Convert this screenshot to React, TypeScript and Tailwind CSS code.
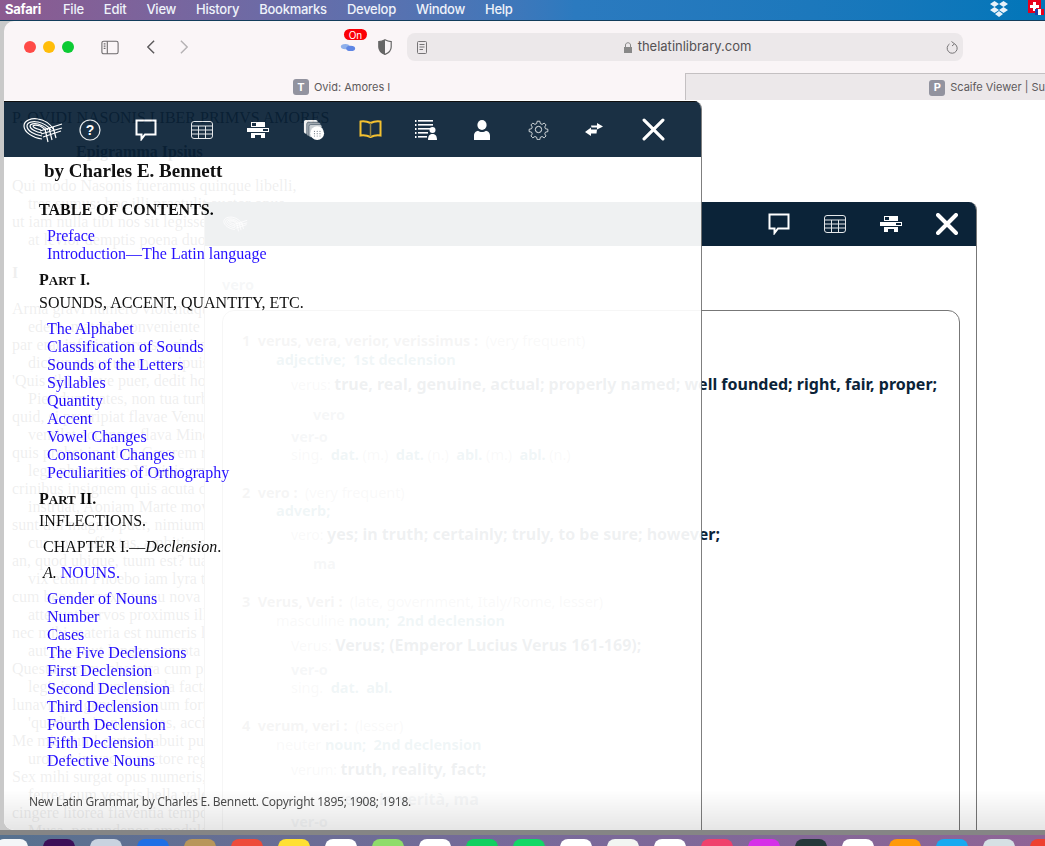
import React from 'react'

const serif = "font-['Liberation_Serif',serif]"

const menuItems = ['File', 'Edit', 'View', 'History', 'Bookmarks', 'Develop', 'Window', 'Help']

const dockIcons = [
  'bg-[#f4f6f8]', 'bg-[#3c0f58]', 'bg-[#c9d3e0]', 'bg-[#1f6fe5]', 'bg-[#b8965a]', 'bg-[#ee4b3a]',
  'bg-[#ffe033]', 'bg-white', 'bg-[#8fdc6a]', 'bg-white', 'bg-[#10d060]', 'bg-[#12d866]',
  'bg-white', 'bg-[#f2f5f2]', 'bg-white', 'bg-[#f0416c]', 'bg-[#d530e8]', 'bg-[#24393a]',
  'bg-white', 'bg-[#ff9a0a]', 'bg-[#18aaf0]', 'bg-[#d5e0e4]', 'bg-[#ee4030]',
]

const pageLines: [string, boolean][] = [
  ['Arma gravi numero violentaque bella parabam', false],
  ['edere, materia conveniente modis.', true],
  ['par erat inferior versus—risisse Cupido', false],
  ['dicitur atque unum surripuisse pedem.', true],
  ["'Quis tibi, saeve puer, dedit hoc in carmina iuris?", false],
  ['Pieridum vates, non tua turba sumus.', true],
  ['quid, si praeripiat flavae Venus arma Minervae,', false],
  ['ventilet accensas flava Minerva faces?', true],
  ['quis probet in silvis Cererem regnare iugosis,', false],
  ['lege pharetratae Virginis arva coli?', true],
  ['crinibus insignem quis acuta cuspide Phoebum', false],
  ['instruat, Aoniam Marte movente lyram?', true],
  ['sunt tibi magna, puer, nimiumque potentia regna;', false],
  ['cur opus affectas, ambitiose, novum?', true],
  ['an, quod ubique, tuum est? tua sunt Heliconia tempe?', false],
  ['vix etiam Phoebo iam lyra tuta sua est?', true],
  ['cum bene surrexit versu nova pagina primo,', false],
  ['attenuat nervos proximus ille meos;', true],
  ['nec mihi materia est numeris levioribus apta,', false],
  ['aut puer aut longas compta puella comas.', true],
  ['Questus eram, pharetra cum protinus ille soluta', false],
  ['legit in exitium spicula facta meum,', true],
  ['lunavitque genu sinuosum fortiter arcum,', false],
  ["'quod'que 'canas, vates, accipe' dixit 'opus!'", true],
  ['Me miserum! certas habuit puer ille sagittas.', false],
  ['uror, et in vacuo pectore regnat Amor.', true],
  ['Sex mihi surgat opus numeris, in quinque residat:', false],
  ['ferrea cum vestris bella valete modis!', true],
  ['cingere litorea flaventia tempora myrto,', false],
  ['Musa, per undenos emodulanda pedes!', true],
]

const linksOne = ['The Alphabet', 'Classification of Sounds', 'Sounds of the Letters', 'Syllables', 'Quantity', 'Accent', 'Vowel Changes', 'Consonant Changes', 'Peculiarities of Orthography']
const linksTwo = ['Gender of Nouns', 'Number', 'Cases', 'The Five Declensions', 'First Declension', 'Second Declension', 'Third Declension', 'Fourth Declension', 'Fifth Declension', 'Defective Nouns']

function Logo({ className }: { className?: string }) {
  return (
    <svg viewBox="0 0 40 26" className={className} fill="none" stroke="currentColor" strokeWidth="1.2">
      <path d="M19 22C10 21 1 15 1 9C1 3 9 1 15 2C22 3 28 8 31 13" />
      <path d="M19 19C12 18 4 14 4 9C4 5 10 4 15 5C20 6 25 9 28 13" />
      <path d="M19 16C13 15 7 12 7 9C7 7 11 6 15 7C19 8 22 10 25 13" />
      <path d="M18 13C14 12 10 11 10 9C11 8 14 8 17 9C19 10 21 11 22 13" />
      <path d="M17 14L39 7M18 17L39 11M20 20L38 14" />
      <path d="M22 12L25 25M26 11L29 23M30 10L33 21" />
    </svg>
  )
}

function ChatIcon({ className }: { className?: string }) {
  return (
    <svg viewBox="0 0 22 22" className={className} fill="none" stroke="white" strokeWidth="2">
      <path d="M1.5 1.5H20.5V15.5H10L6.5 20V15.5H1.5Z" />
    </svg>
  )
}

function TableIcon({ className }: { className?: string }) {
  return (
    <svg viewBox="0 0 22 18" className={className} fill="#0b2338" stroke="#e5e8ea" strokeWidth="1">
      <rect x="0.5" y="0.5" width="21" height="17" rx="2.5" />
      <path d="M0.5 5H21.5M0.5 9H21.5M0.5 13H21.5M7.5 5V17.5M14.5 5V17.5" />
    </svg>
  )
}

function BarsIcon({ className }: { className?: string }) {
  return (
    <svg viewBox="0 0 22 16" className={className} fill="white">
      <path d="M4 0H18V5H4ZM5 1V4H9V1Z" fillRule="evenodd" />
      <path d="M0 6H22V10H0ZM16 7V9H21V7Z" fillRule="evenodd" />
      <path d="M4 11H18V16H14V13H8V16H4Z" />
    </svg>
  )
}

function StackIcon({ className }: { className?: string }) {
  return (
    <svg viewBox="0 0 24 24" className={className}>
      <rect x="1" y="1" width="15" height="15" rx="2" fill="#f2f2f2" />
      <rect x="4" y="3.5" width="15" height="15" rx="2" fill="#9aa3ab" stroke="#0b2338" strokeWidth="0.5" />
      <rect x="6.5" y="6" width="14" height="14" rx="2" fill="#c7ccd1" stroke="#0b2338" strokeWidth="0.5" />
      <circle cx="15.5" cy="15.5" r="7.5" fill="white" />
      <g fill="#6c7680">
        <circle cx="12.5" cy="13.5" r="0.6" /><circle cx="15.5" cy="13.5" r="0.6" /><circle cx="18.5" cy="13.5" r="0.6" />
        <circle cx="12.5" cy="16" r="0.6" /><circle cx="15.5" cy="16" r="0.6" /><circle cx="18.5" cy="16" r="0.6" />
        <circle cx="12.5" cy="18.5" r="0.6" /><circle cx="15.5" cy="18.5" r="0.6" /><circle cx="18.5" cy="18.5" r="0.6" />
      </g>
    </svg>
  )
}

function BookIcon({ className }: { className?: string }) {
  return (
    <svg viewBox="0 0 22 19" className={className} fill="none" stroke="#f4bd23" strokeWidth="2">
      <path d="M11 3C8 1.5 4.5 1 1 1.5V15.5C4.5 15 8 15.5 11 17C14 15.5 17.5 15 21 15.5V1.5C17.5 1 14 1.5 11 3Z" />
      <path d="M11 3V17" stroke="#8b7a38" strokeWidth="1.5" />
    </svg>
  )
}

function ListPersonIcon({ className }: { className?: string }) {
  return (
    <svg viewBox="0 0 22 21" className={className} fill="white">
      <rect x="0" y="1" width="1.5" height="2" /><rect x="3" y="1" width="15" height="1.6" />
      <rect x="0" y="5" width="1.5" height="2" /><rect x="3" y="5" width="15" height="1.6" />
      <rect x="0" y="9" width="1.5" height="2" /><rect x="3" y="9" width="15" height="1.6" />
      <rect x="0" y="13" width="1.5" height="2" /><rect x="3" y="13" width="10" height="1.6" />
      <rect x="0" y="17" width="1.5" height="2" /><rect x="3" y="17" width="9" height="1.6" />
      <circle cx="17.5" cy="11" r="3" />
      <path d="M13 21C13 16.5 15 15 17.5 15C20 15 22 16.5 22 21Z" />
    </svg>
  )
}

function PersonIcon({ className }: { className?: string }) {
  return (
    <svg viewBox="0 0 16 20" className={className} fill="white">
      <ellipse cx="8" cy="5" rx="4.6" ry="5" />
      <path d="M0 20V15.5C0 12.5 2.5 11 4 10.8C6 12.5 10 12.5 12 10.8C13.5 11 16 12.5 16 15.5V20Z" />
    </svg>
  )
}

function GearIcon({ className }: { className?: string }) {
  return (
    <svg viewBox="0 0 24 24" className={className} fill="none" stroke="#e8ebed" strokeWidth="1.1">
      <circle cx="12" cy="12" r="3.6" />
      <path d="M10.3 1.5h3.4l.6 3 2.3 1 2.6-1.7 2.4 2.4-1.7 2.6 1 2.3 3 .6v3l-3 .6-1 2.3 1.7 2.6-2.4 2.4-2.6-1.7-2.3 1-.6 3h-3.4l-.6-3-2.3-1-2.6 1.7-2.4-2.4 1.7-2.6-1-2.3-3-.6v-3l3-.6 1-2.3-1.7-2.6 2.4-2.4 2.6 1.7 2.3-1z" transform="translate(1.2 1.2) scale(0.9)" />
    </svg>
  )
}

function ArrowsIcon({ className }: { className?: string }) {
  return (
    <svg viewBox="0 0 18 13" className={className} fill="white">
      <path d="M6 2.5H12V0L18 3.5L12 6.5V4.5H6.5Z" />
      <path d="M12 6.5H6V4.5L0 9L6 13V10.5H11.5Z" />
    </svg>
  )
}

function CloseIcon({ className, width = 3 }: { className?: string; width?: number }) {
  return (
    <svg viewBox="0 0 22 22" className={className} stroke="white" strokeWidth={width} strokeLinecap="round">
      <path d="M2 2L20 20M20 2L2 20" />
    </svg>
  )
}

function TabIcon({ letter }: { letter: string }) {
  return (
    <span className="flex h-4 w-4 items-center justify-center rounded-[3px] bg-[#92939f] text-[11px] font-bold leading-none text-white">
      {letter}
    </span>
  )
}

function SafariToolbar() {
  return (
    <div className="flex h-[52px] items-center">
      <div className="ml-5 flex items-center gap-[7px]">
        <span className="h-3 w-3 rounded-full bg-[#ff4a47]" />
        <span className="h-3 w-3 rounded-full bg-[#ffbd0a]" />
        <span className="h-3 w-3 rounded-full bg-[#0ccb34]" />
      </div>
      <svg viewBox="0 0 20 16" className="ml-[27px] h-[15px] w-[18px]" fill="none" stroke="#6d6a6c" strokeWidth="1.2">
        <rect x="1" y="1" width="18" height="14" rx="2" />
        <path d="M7 1V15" />
        <path d="M3 4H5M3 6.5H5M3 9H5" />
      </svg>
      <svg viewBox="0 0 10 16" className="ml-[27px] h-4 w-[9px]" fill="none" stroke="#5c5a5c" strokeWidth="1.6">
        <path d="M9 1L2 8L9 15" />
      </svg>
      <svg viewBox="0 0 10 16" className="ml-[25px] h-4 w-[9px]" fill="none" stroke="#b5b2b4" strokeWidth="1.6">
        <path d="M1 1L8 8L1 15" />
      </svg>
      <div className="relative ml-[150px] h-7 w-[26px]">
        <svg viewBox="0 0 18 10" className="absolute left-[1px] top-[10px] h-[9px] w-4">
          <ellipse cx="6" cy="4" rx="5" ry="3" fill="#8fb0ea" />
          <ellipse cx="12" cy="6" rx="5" ry="3" fill="#5f86e4" />
        </svg>
        <span className="absolute -top-1 left-[5px] flex h-[11px] w-[23px] items-center justify-center rounded-full bg-[#fb0007] font-['Inter',sans-serif] text-[10px] leading-none text-white">
          On
        </span>
      </div>
      <svg viewBox="0 0 14 16" className="ml-[13px] h-4 w-[14px]">
        <path d="M7 0.8C5 2 3 2.5 0.8 2.6V8C0.8 11.5 3.5 14 7 15.4C10.5 14 13.2 11.5 13.2 8V2.6C11 2.5 9 2 7 0.8Z" fill="none" stroke="#666" strokeWidth="1.2" />
        <path d="M7 0.8C5 2 3 2.5 0.8 2.6V8C0.8 11.5 3.5 14 7 15.4Z" fill="#666" />
      </svg>
      <div className="ml-[15px] flex h-7 w-[556px] items-center rounded-lg bg-[#ece8ea] pl-[10px] pr-[4px]">
        <svg viewBox="0 0 10 13" className="h-[13px] w-[10px]" fill="none" stroke="#767476" strokeWidth="1">
          <rect x="0.5" y="0.5" width="9" height="12" rx="1" />
          <path d="M2.5 3.5H7.5M2.5 6H7.5M2.5 8.5H6" />
        </svg>
        <div className="flex flex-1 items-center justify-center gap-[6px] pl-[2px] font-['Inter',sans-serif] text-[13px] text-[#555254]">
          <svg viewBox="0 0 8 11" className="h-[11px] w-2" fill="#888">
            <path d="M0 5H8V11H0Z" />
            <path d="M1.5 5V3C1.5 0 6.5 0 6.5 3V5" fill="none" stroke="#888" />
          </svg>
          <span>thelatinlibrary.com</span>
        </div>
        <svg viewBox="0 0 12 13" className="mr-[1px] h-[13px] w-3" fill="none" stroke="#767476" strokeWidth="1">
          <path d="M8.5 2.8A5 5 0 1 1 3.5 3" />
          <path d="M5.5 0.5L8.5 2.8L6 5" />
        </svg>
      </div>
    </div>
  )
}

function PageText() {
  return (
    <div className={`${serif} px-2 pt-[9px] text-[16px] leading-[18px] text-black`}>
      <div>P. OVIDI NASONIS LIBER PRIMVS AMORES</div>
      <div className="ml-[64px] mt-4 font-bold">Epigramma Ipsius</div>
      <div className="mt-4">Qui modo Nasonis fueramus quinque libelli,</div>
      <div className="pl-4">tres sumus; hoc illi praetulit auctor opus.</div>
      <div>ut iam nulla tibi nos sit legisse voluptas,</div>
      <div className="pl-4">at levior demptis poena duobus erit.</div>
      <div className="mt-[15px] font-bold">I</div>
      <div className="mt-[18px]">
        {pageLines.map(([text, indent]) => (
          <div key={text} className={indent ? 'pl-4 whitespace-nowrap' : 'whitespace-nowrap'}>{text}</div>
        ))}
      </div>
    </div>
  )
}

function Lemma({ num, word, note }: { num: string; word: string; note: string }) {
  return (
    <div className="h-[19px] leading-[19px]">
      <span className="font-bold text-[#666]">{num}&nbsp; {word} :</span>
      <span className="font-normal text-[#a0a0a0]">&nbsp; {note}</span>
    </div>
  )
}

function Bold({ children }: { children: React.ReactNode }) {
  return <span className="font-bold text-[#156a7e]">{children}</span>
}

function Def({ word, children, className }: { word: string; children: React.ReactNode; className?: string }) {
  return (
    <div className={`pl-[49px] text-[14px] text-[#a0a0a0] leading-[24px] whitespace-nowrap ${className ?? ''}`}>
      {word}: <span className="text-[16px] font-bold tracking-normal text-[#0b2338]">{children}</span>
    </div>
  )
}

function ScaifePanel() {
  const sans = "font-['Noto_Sans',sans-serif]"
  return (
    <div className={`${sans} absolute bottom-0 left-[200px] top-[102px] w-[773px] overflow-hidden rounded-tr-lg border-x border-[#777] bg-white text-[14.5px] tracking-[-0.05px]`}>
      <div className="flex h-[44px] items-center bg-[#0b2338] pl-[18px]">
        <Logo className="h-4 w-[25px] text-white" />
        <div className="ml-auto flex items-center">
          <div className="flex w-14 justify-center"><ChatIcon className="h-[22px] w-[22px]" /></div>
          <div className="flex w-14 justify-center"><TableIcon className="h-[18px] w-[22px]" /></div>
          <div className="flex w-14 justify-center"><BarsIcon className="h-4 w-[22px]" /></div>
          <div className="flex w-14 justify-center"><CloseIcon className="h-[22px] w-[22px]" width={4} /></div>
          <div className="w-[1px]" />
        </div>
      </div>
      <div className="pl-[17px] pr-[16px]">
        <div className="h-[64px] pt-[28px] font-bold leading-[20px] text-[#6f7f88]">vero</div>
        <div className="h-[700px] rounded-t-xl border border-[#777] pl-[19px] pt-[20px]">
          <Lemma num="1" word="verus, vera, verior, verissimus" note="(very frequent)" />
          <div className="pl-[34px] leading-[19px]"><Bold>adjective;&nbsp; 1st declension</Bold></div>
          <Def word="verus" className="mt-[3px]">true, real, genuine, actual; properly named; well founded; right, fair, proper;</Def>
          <div className="mt-[7px] pl-[71px] font-bold leading-[20px] text-[#6f7f88]">vero</div>
          <div className="mt-[3px] pl-[49px] font-bold leading-[18px] text-[#6f7f88]">ver-o</div>
          <div className="pl-[49px] leading-[18px] text-[#a0a0a0]">sing.&nbsp; <Bold>dat.</Bold> (m.)&nbsp; <Bold>dat.</Bold> (n.)&nbsp; <Bold>abl.</Bold> (m.)&nbsp; <Bold>abl.</Bold> (n.)</div>

          <div className="mt-[20px]"><Lemma num="2" word="vero" note="(very frequent)" /></div>
          <div className="-mt-[1px] pl-[34px] leading-[18px]"><Bold>adverb;</Bold></div>
          <Def word="vero" className="mt-[3px]">yes; in truth; certainly; truly, to be sure; however;</Def>
          <div className="mt-[6px] pl-[71px] font-bold leading-[20px] text-[#6f7f88]">ma</div>

          <div className="mt-[19px]"><Lemma num="3" word="Verus, Veri" note="(late, government, Italy/Rome, lesser)" /></div>
          <div className="pl-[34px] leading-[19px] text-[#a0a0a0]">masculine <Bold>noun;&nbsp; 2nd declension</Bold></div>
          <Def word="Verus" className="mt-[3px]">Verus; (Emperor Lucius Verus 161-169);</Def>
          <div className="mt-[2px] pl-[49px] font-bold leading-[18px] text-[#6f7f88]">ver-o</div>
          <div className="pl-[49px] leading-[18px] text-[#a0a0a0]">sing.&nbsp; <Bold>dat.</Bold>&nbsp; <Bold>abl.</Bold></div>

          <div className="mt-[20px]"><Lemma num="4" word="verum, veri" note="(lesser)" /></div>
          <div className="pl-[34px] leading-[19px] text-[#a0a0a0]">neuter <Bold>noun;&nbsp; 2nd declension</Bold></div>
          <Def word="verum" className="mt-[3px]">truth, reality, fact;</Def>
          <div className="mt-[7px] pl-[93px] text-[16px] font-bold leading-[20px] text-[#6f7f88]">vero, in verità, ma</div>
          <div className="mt-[3px] pl-[49px] font-bold leading-[18px] text-[#6f7f88]">ver-o</div>
        </div>
      </div>
    </div>
  )
}

function GrammarPanel() {
  return (
    <div className="absolute bottom-0 left-0 top-[1px] flex w-[698px] flex-col overflow-hidden rounded-tr-lg border-r border-[#777] bg-white opacity-[.94]">
      <div className="flex h-14 shrink-0 items-center border-t border-[#000] bg-[#0b2338] pl-[19px]">
        <Logo className="h-[26px] w-[40px] text-white" />
        <div className="ml-[-1px] flex w-14 justify-center">
          <svg viewBox="0 0 22 22" className="h-[22px] w-[22px]" fill="none" stroke="#e8ebed" strokeWidth="1.2">
            <circle cx="11" cy="11" r="10" />
            <text x="11" y="16" textAnchor="middle" fontSize="14" fontWeight="700" fontFamily="Liberation Sans, sans-serif" fill="white" stroke="none">?</text>
          </svg>
        </div>
        <div className="flex w-14 justify-center"><ChatIcon className="h-[22px] w-[22px]" /></div>
        <div className="flex w-14 justify-center"><TableIcon className="h-[18px] w-[22px]" /></div>
        <div className="flex w-14 justify-center"><BarsIcon className="h-4 w-[22px]" /></div>
        <div className="flex w-14 justify-center"><StackIcon className="h-[22px] w-[22px]" /></div>
        <div className="flex w-14 justify-center"><BookIcon className="h-[19px] w-[23px]" /></div>
        <div className="flex w-14 justify-center"><ListPersonIcon className="h-[21px] w-[22px]" /></div>
        <div className="flex w-14 justify-center"><PersonIcon className="h-5 w-4" /></div>
        <div className="flex w-14 justify-center"><GearIcon className="h-[21px] w-[21px]" /></div>
        <div className="flex w-14 justify-center"><ArrowsIcon className="h-[13px] w-[18px]" /></div>
        <div className="ml-[3px] flex w-14 justify-center"><CloseIcon className="h-[23px] w-[23px]" /></div>
      </div>
      <div className={`${serif} relative flex-1 pl-[35px] pt-[3px] text-[16px] leading-[18px] text-black`}>
        <div className="ml-[5px] text-[19px] font-bold leading-[22px]">by Charles E. Bennett</div>
        <div className="mt-[19px] font-bold">TABLE OF CONTENTS.</div>
        <div className="ml-2 mt-2 text-[#1800ff]">
          <div>Preface</div>
          <div>Introduction—The Latin language</div>
        </div>
        <div className="mt-2 font-bold">P<span className="text-[13px]">ART</span> I.</div>
        <div className="mt-1">SOUNDS, ACCENT, QUANTITY, ETC.</div>
        <div className="ml-2 mt-2 text-[#1800ff]">
          {linksOne.map(link => <div key={link}>{link}</div>)}
        </div>
        <div className="mt-2 font-bold">P<span className="text-[13px]">ART</span> II.</div>
        <div className="mt-[3px]">INFLECTIONS.</div>
        <div className="ml-1 mt-2">CHAPTER I.—<em>Declension</em>.</div>
        <div className="ml-1 mt-2"><em>A.</em> <span className="text-[#1800ff]">NOUNS.</span></div>
        <div className="ml-2 mt-2 text-[#1800ff]">
          {linksTwo.map(link => <div key={link}>{link}</div>)}
        </div>
        <div className="absolute left-[25px] top-[637px] font-['Noto_Sans',sans-serif] text-[12px] leading-4 tracking-[-0.27px] text-[#444]">
          New Latin Grammar, by Charles E. Bennett. Copyright 1895; 1908; 1918.
        </div>
      </div>
    </div>
  )
}

export default function App() {
  return (
    <div className="flex h-[846px] w-[1045px] flex-col overflow-hidden bg-[#8a8a8a]">
      <div className="flex h-[21px] shrink-0 items-center border-b border-[#123d5c] bg-linear-to-r from-[#8c5a90] via-[#2b7abf] via-55% to-[#0076b9] pl-[5px] font-['Inter',sans-serif] text-[13px] font-medium tracking-[-0.25px] text-[#eef2fa]">
        <span className="mr-[22px] font-bold text-white">Safari</span>
        <div className="flex gap-[20px]">
          {menuItems.map(item => <span key={item}>{item}</span>)}
        </div>
        <svg viewBox="0 0 18 16" className="ml-auto mb-[3px] h-4 w-[18px]" fill="#e8f2fa">
          <path d="M4.5 0L9 3L4.5 6L0 3ZM13.5 0L18 3L13.5 6L9 3ZM4.5 6L9 9L4.5 12L0 9ZM13.5 6L18 9L13.5 12L9 9ZM9 10L13 13L9 16L5 13Z" />
        </svg>
        <div className="relative mb-[7px] ml-5 mr-[4px] h-[13px] w-[13px] bg-[#e8001c]">
          <span className="absolute left-[5px] top-[2px] h-[9px] w-[3px] bg-white" />
          <span className="absolute left-[2px] top-[5px] h-[3px] w-[9px] bg-white" />
          <span className="absolute left-[7px] top-[9px] flex h-[6px] w-[9px]">
            <span className="flex-1 bg-[#1d3fa8]" />
            <span className="flex-1 bg-white" />
            <span className="flex-1 bg-[#e8001c]" />
          </span>
        </div>
      </div>

      <div className="flex min-h-0 flex-1 bg-[#c9c9c9]">
        <div className="ml-[4px] flex flex-1 flex-col overflow-hidden rounded-l-[10px] bg-[#faf5f7]">
          <SafariToolbar />
          <div className="flex h-[27px] shrink-0 font-['Inter',sans-serif] text-[11px] text-[#5d5a5c]">
            <div className="flex w-[682px] items-center justify-center gap-[5px] pr-[6px] pt-[1px]">
              <TabIcon letter="T" />
              <span>Ovid: Amores I</span>
            </div>
            <div className="flex flex-1 items-center gap-[5px] whitespace-nowrap border-l border-t border-[#c4c0c2] bg-[#ece8ea] pl-[243px] pt-[1px]">
              <TabIcon letter="P" />
              <span>Scaife Viewer | Su</span>
            </div>
          </div>
          <div className="relative min-h-0 flex-1 overflow-hidden bg-white">
            <PageText />
            <ScaifePanel />
            <GrammarPanel />
            <div className="pointer-events-none absolute inset-x-0 bottom-0 h-10 bg-linear-to-b from-transparent to-black/10" />
          </div>
        </div>
      </div>

      <div className="h-[5px] shrink-0 bg-[#858585]" />
      <div className="flex h-[11px] shrink-0 items-start overflow-hidden bg-linear-to-r from-[#56718f] via-[#776a9a] to-[#8f6496] pt-[4px]">
        <div className="ml-[-4px] flex gap-[15px]">
          {dockIcons.map((color, i) => (
            <span key={i} className={`h-[32px] w-[32px] shrink-0 rounded-[8px] ${color}`} />
          ))}
        </div>
      </div>
    </div>
  )
}
